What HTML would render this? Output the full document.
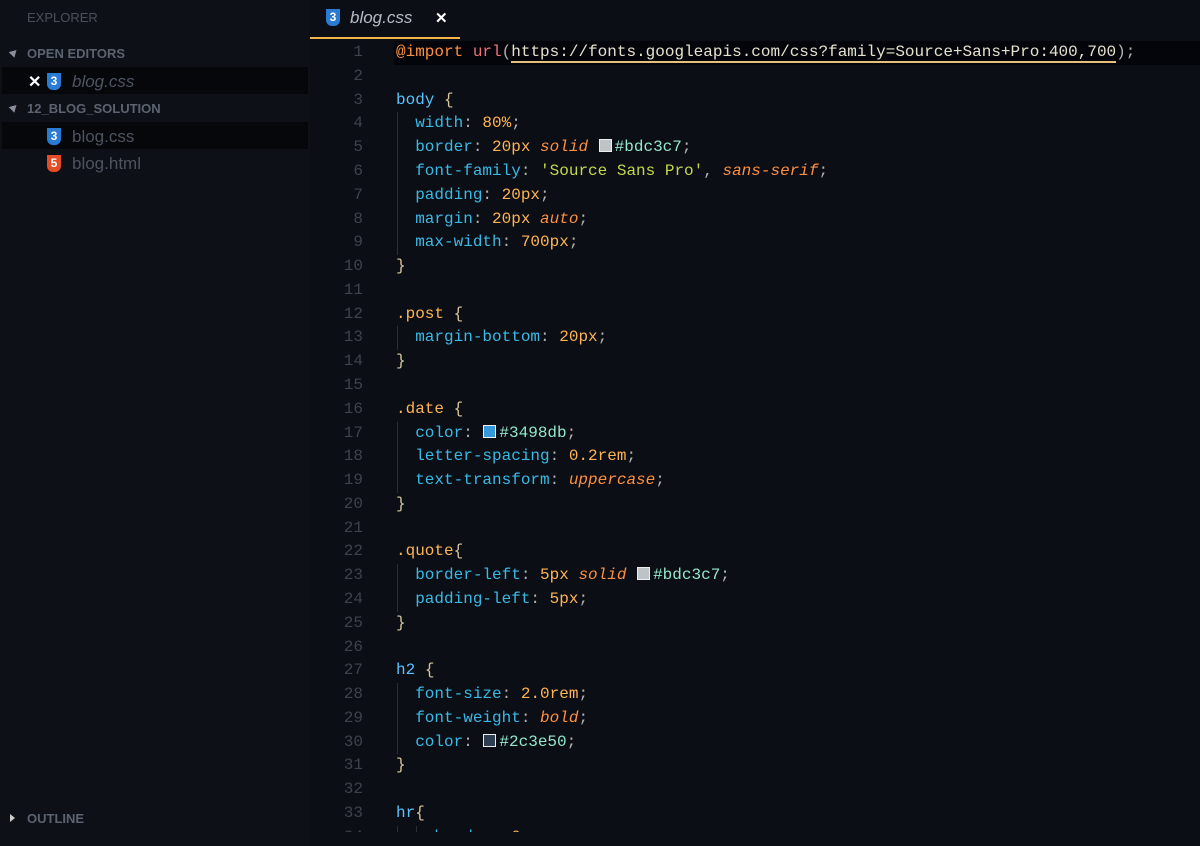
<!DOCTYPE html>
<html><head><meta charset="utf-8"><style>
*{margin:0;padding:0;box-sizing:border-box}
body{width:1200px;height:846px;background:#0b0e14;overflow:hidden;position:relative;font-family:"Liberation Sans",sans-serif}
#side{position:absolute;left:0;top:0;width:310px;height:846px;background:#0d1017}
.sh{position:absolute;left:27px;font-size:13px;font-weight:bold;color:#5c6370}
.tri{position:absolute;left:10px;width:0;height:0;border-left:4px solid transparent;border-right:4px solid transparent}
.row{position:absolute;left:2px;width:306px;height:27px}
.f{position:absolute;font-size:17px;color:#4d5360}
.ic{position:absolute;width:14px;height:17px;border-radius:0 0 6px 6px;color:#fff;font-size:12px;font-weight:bold;text-align:center;line-height:16px}
#ed{position:absolute;left:310px;top:41px;width:890px;height:791px;overflow:hidden;font-family:"Liberation Mono",monospace;font-size:16px}
.ln{position:absolute;left:0;width:53px;text-align:right;color:#3d424d;height:23.8px;line-height:23.8px}
.cd{position:absolute;left:86px;white-space:pre;height:23.8px;line-height:23.8px;color:#b3b1ad}
.p{color:#39bae6}.n{color:#ffb454}.k{color:#ff8f40;font-style:italic}.h{color:#95e6cb}.s{color:#c2d94c}.sel{color:#59c2ff}.cls{color:#ffb454}.b{color:#d9c59a}.pu{color:#b3b1ad}
.sw{display:inline-block;width:13px;height:13px;border:1.5px solid #eee;margin:0 3px 0 1px;vertical-align:-1px}
.g{position:absolute;width:1px;background:#2a2e36}
</style></head><body>
<div id="side">
<div style="position:absolute;left:27px;top:10px;font-size:13px;color:#4a4f59">EXPLORER</div>
<div class="tri" style="top:49px;border-bottom:7px solid #8a8f99;transform:rotate(45deg)"></div>
<div class="sh" style="top:46px">OPEN EDITORS</div>
<div class="row" style="top:67px;background:#05070b"></div>
<div style="position:absolute;left:28px;top:72px;color:#fff;font-size:16px;font-weight:bold">✕</div>
<div class="ic" style="left:47px;top:73px;background:#2a7bd3">3</div>
<div class="f" style="left:72px;top:72px;font-style:italic">blog.css</div>
<div class="tri" style="top:104px;border-bottom:7px solid #8a8f99;transform:rotate(45deg)"></div>
<div class="sh" style="top:101px">12_BLOG_SOLUTION</div>
<div class="row" style="top:122px;background:#05070b"></div>
<div class="ic" style="left:47px;top:128px;background:#2a7bd3">3</div>
<div class="f" style="left:72px;top:127px">blog.css</div>
<div class="ic" style="left:47px;top:155px;background:#e44d26">5</div>
<div class="f" style="left:72px;top:154px">blog.html</div>
<div style="position:absolute;left:10px;top:814px;width:0;height:0;border-top:4px solid transparent;border-bottom:4px solid transparent;border-left:5px solid #ccc"></div>
<div class="sh" style="top:811px">OUTLINE</div>
</div>
<div style="position:absolute;left:310px;top:0;width:150px;height:39px;background:#0b0e14;border-bottom:2px solid #f2b548"></div>
<div class="ic" style="left:326px;top:9px;background:#2a7bd3">3</div>
<div style="position:absolute;left:350px;top:8px;font-size:17px;font-style:italic;color:#b8bcc4">blog.css</div>
<div style="position:absolute;left:435px;top:9px;font-size:15px;font-weight:bold;color:#fff">✕</div>
<div id="ed">
<div style="position:absolute;left:84px;top:0;width:806px;height:24px;background:#03050a"></div>
<div id="L"></div>
</div>
<script>
var L=[
'<span class="k" style="font-style:normal">@import</span> <span style="color:#f07178">url</span><span class="pu">(</span><span style="color:#e6e1cf;border-bottom:2px solid #e6c07b">https://fonts.googleapis.com/css?family=Source+Sans+Pro:400,700</span><span class="pu">);</span>',
'',
'<span class="sel">body</span> <span class="b">{</span>',
'  <span class="p">width</span>: <span class="n">80%</span>;',
'  <span class="p">border</span>: <span class="n">20px</span> <span class="k">solid</span> <span class="sw" style="background:#bdc3c7"></span><span class="h">#bdc3c7</span>;',
'  <span class="p">font-family</span>: <span class="s">\'Source Sans Pro\'</span>, <span class="k">sans-serif</span>;',
'  <span class="p">padding</span>: <span class="n">20px</span>;',
'  <span class="p">margin</span>: <span class="n">20px</span> <span class="k">auto</span>;',
'  <span class="p">max-width</span>: <span class="n">700px</span>;',
'<span class="b">}</span>','',
'<span class="cls">.post</span> <span class="b">{</span>',
'  <span class="p">margin-bottom</span>: <span class="n">20px</span>;',
'<span class="b">}</span>','',
'<span class="cls">.date</span> <span class="b">{</span>',
'  <span class="p">color</span>: <span class="sw" style="background:#3498db"></span><span class="h">#3498db</span>;',
'  <span class="p">letter-spacing</span>: <span class="n">0.2rem</span>;',
'  <span class="p">text-transform</span>: <span class="k">uppercase</span>;',
'<span class="b">}</span>','',
'<span class="cls">.quote</span><span class="b">{</span>',
'  <span class="p">border-left</span>: <span class="n">5px</span> <span class="k">solid</span> <span class="sw" style="background:#bdc3c7"></span><span class="h">#bdc3c7</span>;',
'  <span class="p">padding-left</span>: <span class="n">5px</span>;',
'<span class="b">}</span>','',
'<span class="sel">h2</span> <span class="b">{</span>',
'  <span class="p">font-size</span>: <span class="n">2.0rem</span>;',
'  <span class="p">font-weight</span>: <span class="k">bold</span>;',
'  <span class="p">color</span>: <span class="sw" style="background:#2c3e50"></span><span class="h">#2c3e50</span>;',
'<span class="b">}</span>','',
'<span class="sel">hr</span><span class="b">{</span>',
'    <span class="p">border</span>: <span class="n">0</span>;'];
var h='';
for(var i=0;i<L.length;i++){var t=(i*23.78).toFixed(1);
h+='<div class="ln" style="top:'+t+'px">'+(i+1)+'</div><div class="cd" style="top:'+t+'px">'+L[i]+'</div>';}
var G=[[4,10],[13,14],[17,20],[23,25],[28,31],[34,35]];
G.forEach(function(g){h+='<div class="g" style="left:87px;top:'+((g[0]-1)*23.78).toFixed(1)+'px;height:'+((g[1]-g[0])*23.78)+'px"></div>'});
h+='<div class="g" style="left:106px;top:'+(33*23.78)+'px;height:24px"></div>';
document.getElementById('L').innerHTML=h;
</script>
</body></html>
